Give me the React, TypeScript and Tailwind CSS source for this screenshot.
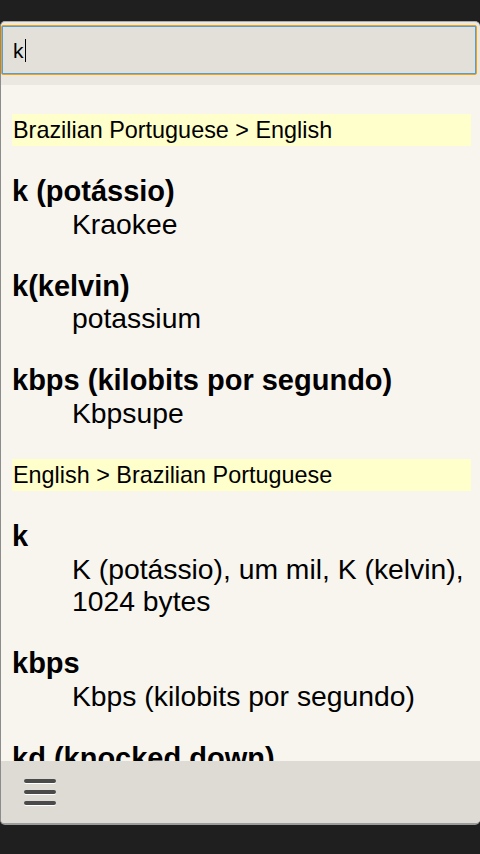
const sections = [
  {
    title: "Brazilian Portuguese > English",
    entries: [
      { head: "k (potássio)", body: "Kraokee" },
      { head: "k(kelvin)", body: "potassium" },
      { head: "kbps (kilobits por segundo)", body: "Kbpsupe" },
    ],
  },
  {
    title: "English > Brazilian Portuguese",
    entries: [
      { head: "k", body: "K (potássio), um mil, K (kelvin), 1024 bytes" },
      { head: "kbps", body: "Kbps (kilobits por segundo)" },
      { head: "kd (knocked down)", body: "" },
    ],
  },
];

function Entry({ head, body }: { head: string; body: string }) {
  return (
    <div className="mt-[29.5px]">
      <div className="text-[29px] font-bold leading-[32.5px] text-black">{head}</div>
      {body && <div className="pl-[60px] text-[28.3px] leading-[32.5px] text-black">{body}</div>}
    </div>
  );
}

export default function App() {
  return (
    <div
      className="w-[480px] h-[854px] bg-[#1f1f1f] flex flex-col pt-[21px] pb-[29px] overflow-hidden"
      style={{ fontFamily: '"Liberation Sans", Arial, sans-serif' }}
    >
      <div className="flex-1 flex flex-col overflow-hidden rounded-[5px] border-l border-l-[#8c8c8c] border-t border-t-[#a9a9a9] border-b-2 border-b-[#9c9c9c] bg-[#ebe8e1]">
        {/* search field */}
        <div className="pt-[3px] pb-[10px] pr-[3px]">
          <div className="h-[50px] border border-[#eaa41c] rounded-[2px]">
            <div className="h-full border border-[#5d9cc4] bg-[#e3e0d9] flex items-center pl-[10px]">
              <span className="text-[21px] text-black leading-none">k</span>
              <span className="w-px h-[23px] bg-black ml-[1px]"></span>
            </div>
          </div>
        </div>

        {/* results */}
        <div className="flex-1 overflow-hidden bg-[#f8f5ef] pl-[11px] pr-[8px] pt-[28.5px]">
          {sections.map((s, i) => (
            <div key={s.title} className={i > 0 ? "mt-[29.5px]" : ""}>
              <div className="mr-[1px] h-[32px] bg-[#ffffcc] pl-[1px] text-[23.4px] leading-[32px] text-black">
                {s.title}
              </div>
              {s.entries.map((e) => (
                <Entry key={e.head} head={e.head} body={e.body} />
              ))}
            </div>
          ))}
        </div>

        {/* toolbar */}
        <div className="h-[62px] shrink-0 bg-[#dedbd5] flex items-center pl-[23px]">
          <div className="flex flex-col gap-[7px]">
            <span className="block w-[32px] h-[4px] rounded-full bg-[#4a4a4a] shadow-[0_1px_0_#ffffff]"></span>
            <span className="block w-[32px] h-[4px] rounded-full bg-[#4a4a4a] shadow-[0_1px_0_#ffffff]"></span>
            <span className="block w-[32px] h-[4px] rounded-full bg-[#4a4a4a] shadow-[0_1px_0_#ffffff]"></span>
          </div>
        </div>
      </div>
    </div>
  );
}
